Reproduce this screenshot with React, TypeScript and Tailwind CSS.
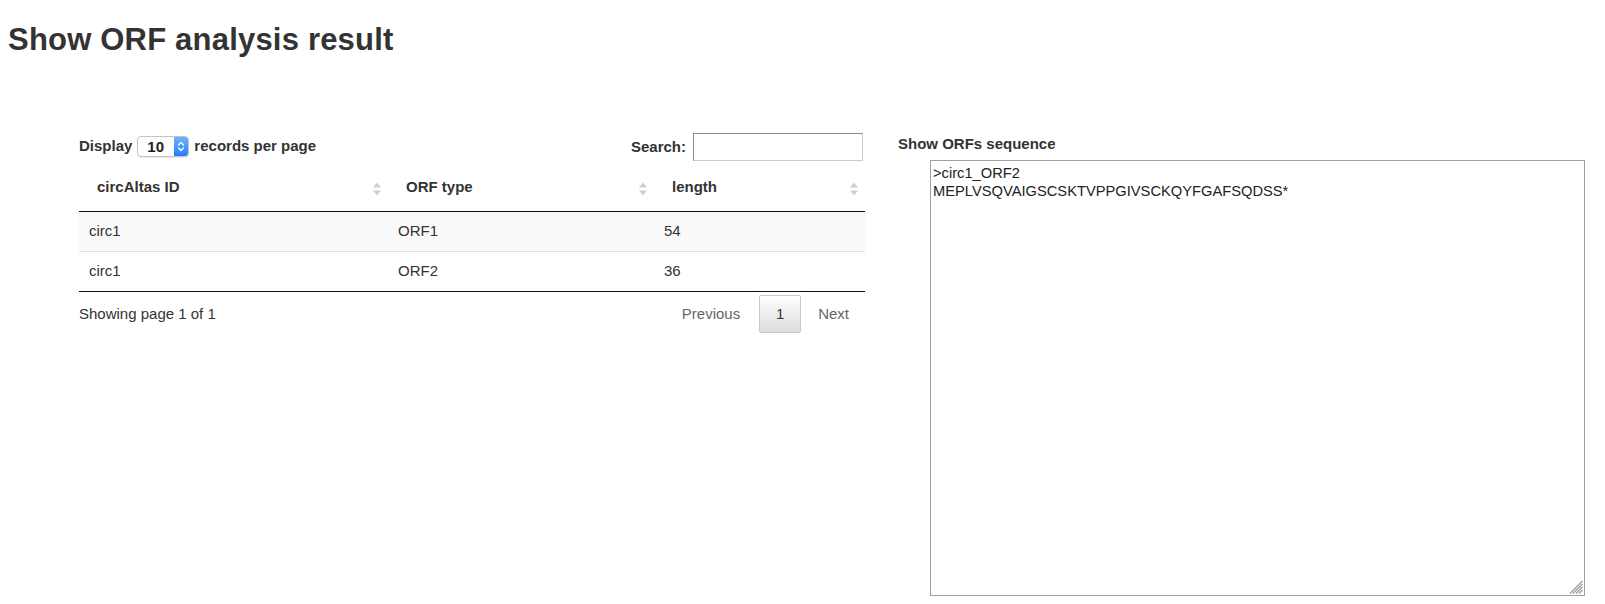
import React from 'react';

type OrfRow = { id: string; type: string; length: number };

const ROWS: OrfRow[] = [
  { id: 'circ1', type: 'ORF1', length: 54 },
  { id: 'circ1', type: 'ORF2', length: 36 },
];

const COLUMNS = ['circAltas ID', 'ORF type', 'length'];

const SEQUENCE = '>circ1_ORF2\nMEPLVSQVAIGSCSKTVPPGIVSCKQYFGAFSQDSS*';

// Both arrows greyed out: column is sortable but not sorted yet.
function SortBoth() {
  return (
    <svg width="10" height="16" viewBox="0 0 10 16" className="mt-[2px] shrink-0">
      <polygon points="1,6.5 5,1.5 9,6.5" fill="#cfcfcf" />
      <polygon points="1,9.5 5,14.5 9,9.5" fill="#cfcfcf" />
    </svg>
  );
}

// Mac-style popup select: white face with a blue stepper cap.
function LengthSelect() {
  return (
    <div className="flex h-[21px] w-[52px] overflow-hidden rounded-[4px] border border-[#c4c4c4] bg-white shadow-[0_1px_1px_rgba(0,0,0,0.08)]">
      <div className="flex flex-1 items-center pl-[9px] text-[15px] font-bold leading-none text-[#222]">10</div>
      <div className="flex w-[14px] items-center justify-center bg-gradient-to-b from-[#6db4fb] to-[#1f7ef4]">
        <svg width="8" height="13" viewBox="0 0 8 13">
          <path d="M1.5 5 L4 2.5 L6.5 5" stroke="#fff" strokeWidth="1.3" fill="none" strokeLinecap="round" strokeLinejoin="round" />
          <path d="M1.5 8 L4 10.5 L6.5 8" stroke="#fff" strokeWidth="1.3" fill="none" strokeLinecap="round" strokeLinejoin="round" />
        </svg>
      </div>
    </div>
  );
}

function ResizeGrip() {
  return (
    <svg width="14" height="14" viewBox="0 0 14 14" className="absolute bottom-[1px] right-[1px]">
      {[1, 4, 7, 10].map((o) => (
        <line key={o} x1={o} y1={13.5} x2={13.5} y2={o} stroke="#9c9c9c" strokeWidth="1.2" />
      ))}
    </svg>
  );
}

function OrfTable() {
  return (
    <div className="ml-[79px] w-[786px]">
      {/* length menu + search filter */}
      <div className="flex h-[32px] items-center justify-between">
        <div className="flex items-center text-[15px] font-bold">
          <span>Display</span>
          <span className="mx-[5px]">
            <LengthSelect />
          </span>
          <span>records per page</span>
        </div>
        <div className="mr-[2px] mt-[2px] flex items-center text-[15px] font-bold">
          <span className="mr-[7px]">Search:</span>
          <div className="h-[28px] w-[170px] border border-b-[#cccccc] border-l-[#8c8c8c] border-r-[#cccccc] border-t-[#8c8c8c] bg-white" />
        </div>
      </div>

      <div className="grid h-[50px] grid-cols-[309px_266px_211px] border-b border-[#111]">
        {COLUMNS.map((c) => (
          <div key={c} className="flex items-center justify-between pl-[18px] pr-[6px] pt-[2px] text-[15px] font-bold">
            <span>{c}</span>
            <SortBoth />
          </div>
        ))}
      </div>

      {ROWS.map((r, i) => (
        <div
          key={r.type}
          className={`grid h-[40px] grid-cols-[309px_266px_211px] border-b text-[15px] ${
            i === ROWS.length - 1 ? 'border-[#111]' : 'border-[#dddddd]'
          } ${i % 2 === 0 ? 'bg-[#f9f9f9]' : 'bg-white'}`}
        >
          <div className="flex items-center pl-[10px]">{r.id}</div>
          <div className="flex items-center pl-[10px]">{r.type}</div>
          <div className="flex items-center pl-[10px]">{r.length}</div>
        </div>
      ))}

      {/* info + paging */}
      <div className="mt-[3px] flex h-[38px] items-center justify-between text-[15px]">
        <span>Showing page 1 of 1</span>
        <div className="flex items-center">
          <span className="pl-[15px] pr-[19px] text-[#666]">Previous</span>
          <span className="flex h-[38px] w-[42px] items-center justify-center rounded-[2px] border border-[#cacaca] bg-gradient-to-b from-white to-[#dcdcdc]">
            1
          </span>
          <span className="ml-[1px] pl-[16px] pr-[16px] text-[#666]">Next</span>
        </div>
      </div>
    </div>
  );
}

export default function App() {
  return (
    <div className="h-[604px] w-[1605px] overflow-hidden bg-white text-[#333] [font-family:'Liberation_Sans',Arial,sans-serif]">
      <h2 className="pl-[8px] pt-[24px] text-[31px] font-bold leading-[31px] tracking-[0.2px]">Show ORF analysis result</h2>

      <div className="mt-[75px] flex">
        <OrfTable />

        <div className="ml-[33px]">
          <div className="mt-[5px] text-[15px] font-bold leading-[18px]">Show ORFs sequence</div>
          <div className="relative ml-[32px] mt-[7px] h-[436px] w-[655px] whitespace-pre border border-[#a0a0a0] bg-white pl-[2px] pt-[3px] text-[14.7px] leading-[18px] text-[#222]">
            {SEQUENCE}
            <ResizeGrip />
          </div>
        </div>
      </div>
    </div>
  );
}
